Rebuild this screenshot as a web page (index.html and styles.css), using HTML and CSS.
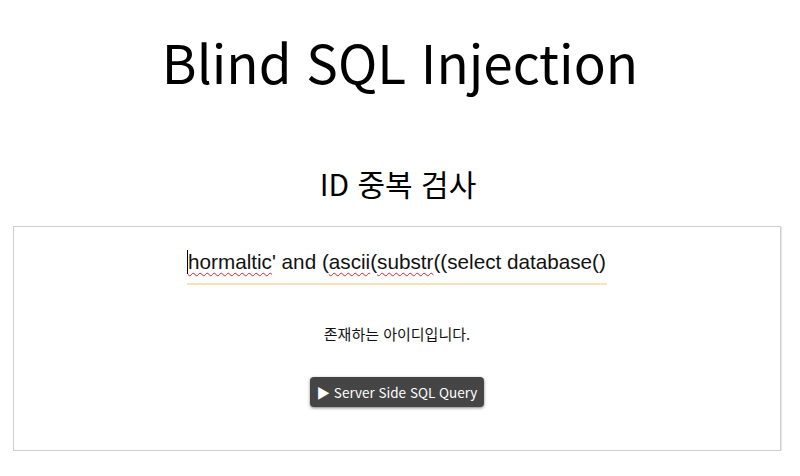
FILE: index.html
```html
<!DOCTYPE html>
<html lang="ko">
<head>
<meta charset="utf-8">
<link rel="stylesheet" href="styles.css">
</head>
<body>
<h1 class="title">Blind SQL Injection</h1>
<h2 class="subtitle">ID 중복 검사</h2>
<div class="panel">
  <div class="field">
    <div class="field-text"><span class="caret"></span><span class="typo">hormaltic</span>' and (<span class="typo">ascii</span>(<span class="typo">substr</span>((select database()</div>
  </div>
  <p class="message">존재하는 아이디입니다.</p>
  <button class="query-btn">▶ Server Side SQL Query</button>
</div>
</body>
</html>
```
FILE: styles.css
```css
html, body {
  margin: 0;
  padding: 0;
  background: #fff;
}
body {
  font-family: "Noto Sans CJK KR", "Open Sans", sans-serif;
  color: #000;
  display: flex;
  flex-direction: column;
  align-items: center;
}
.title {
  font-weight: 400;
  font-size: 53px;
  line-height: 1;
  margin: 35px 0 0 0;
}
.subtitle {
  font-weight: 400;
  font-size: 30px;
  line-height: 1;
  margin: 80px 0 0 -4px;
}
.panel {
  box-sizing: border-box;
  width: 768px;
  margin: 28px 0 0 -6px;
  height: 225px;
  border: 1px solid #cfcfcf;
  box-shadow: 1px 1px 1px #e6e6e6;
  display: flex;
  flex-direction: column;
  align-items: center;
}
.field {
  width: 420px;
  margin-top: 21px;
  border-bottom: 2px solid #f6e2bb;
  padding-bottom: 7px;
  overflow: hidden;
}
.field-text {
  font-family: "Liberation Sans", Arial, sans-serif;
  font-size: 20.7px;
  line-height: 28px;
  white-space: nowrap;
  color: #111;
}
.caret {
  display: inline-block;
  width: 1px;
  height: 24px;
  background: #000;
  vertical-align: -5px;
}
.typo {
  text-decoration: underline wavy #e02020;
  text-decoration-thickness: 1px;
  text-underline-offset: 3px;
}
.message {
  font-size: 15px;
  margin: 39px 0 0 0;
  line-height: 20px;
  color: #111;
}
.query-btn {
  margin-top: 33px;
  background: #454545;
  color: #fff;
  border: none;
  border-radius: 4px;
  box-shadow: 0 1px 3px rgba(0,0,0,0.5);
  font-family: "Noto Sans CJK KR", "Open Sans", sans-serif;
  font-size: 13.5px;
  padding: 0 7px;
  height: 30px;
  line-height: 30px;
}
```
